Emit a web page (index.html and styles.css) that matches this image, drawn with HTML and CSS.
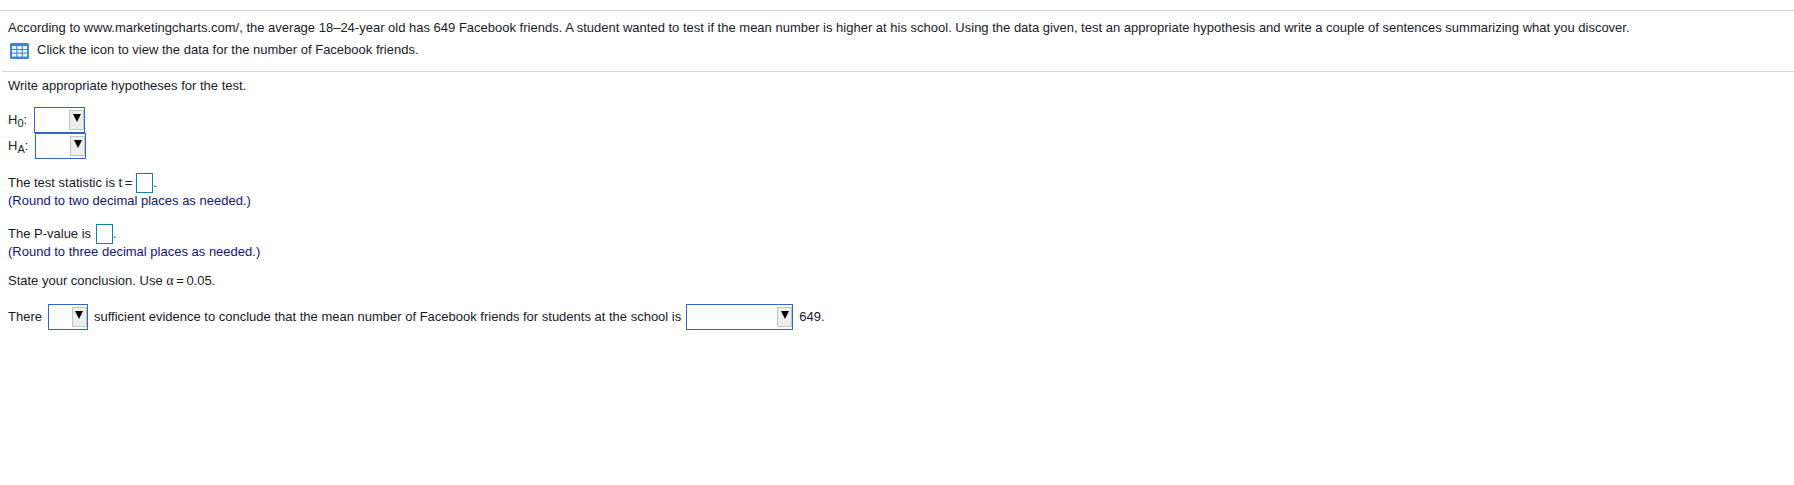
FILE: index.html
```html
<!DOCTYPE html>
<html lang="en">
<head>
<meta charset="utf-8">
<title>Hypothesis test</title>
<link rel="stylesheet" href="styles.css">
</head>
<body>
<section class="question">
  <p class="statement">According to www.marketingcharts.com/, the average 18&ndash;24-year old has 649 Facebook friends. A student wanted to test if the mean number is higher at his school. Using the data given, test an appropriate hypothesis and write a couple of sentences summarizing what you discover.</p>
  <div class="data-link">
    <svg class="grid-icon" width="19" height="16" viewBox="0 0 19 16" aria-hidden="true">
      <rect x="0" y="0" width="19" height="16" rx="1.5" fill="#3a84e0"/>
      <g fill="#eef5fd">
        <rect x="2" y="3" width="4.3" height="3"/><rect x="7.4" y="3" width="4.3" height="3"/><rect x="12.8" y="3" width="4.3" height="3"/>
        <rect x="2" y="7" width="4.3" height="2.6"/><rect x="7.4" y="7" width="4.3" height="2.6"/><rect x="12.8" y="7" width="4.3" height="2.6"/>
        <rect x="2" y="10.6" width="4.3" height="3"/><rect x="7.4" y="10.6" width="4.3" height="3"/><rect x="12.8" y="10.6" width="4.3" height="3"/>
      </g>
    </svg>
    <span>Click the icon to view the data for the number of Facebook friends.</span>
  </div>
</section>
<section class="answer">
  <p class="first">Write appropriate hypotheses for the test.</p>
  <div class="hypotheses">
    <div class="hyp"><span class="hyp-label">H<sub>0</sub>:</span><span class="select s-hyp"><span class="arrow"></span></span></div>
    <div class="hyp hyp-alt"><span class="hyp-label">H<sub>A</sub>:</span><span class="select s-hyp"><span class="arrow"></span></span></div>
  </div>
  <div class="stat"><span class="before-t">The test statistic is t&#8201;=</span><span class="box"></span><span>.</span></div>
  <p class="hint">(Round to two decimal places as needed.)</p>
  <div class="pval"><span class="before-p">The P-value is</span><span class="box"></span><span>.</span></div>
  <p class="hint">(Round to three decimal places as needed.)</p>
  <p class="state">State your conclusion. Use <span class="alpha">&alpha;</span>&#8201;=&#8201;0.05.</p>
  <div class="concl">
    <span>There</span><span class="select s-small"><span class="arrow"></span></span>
    <span>sufficient evidence to conclude that the mean number of Facebook friends for students at the school is</span><span class="select s-big"><span class="arrow"></span></span>
    <span>649.</span>
  </div>
</section>
</body>
</html>
```
FILE: styles.css
```css
* { box-sizing: border-box; }
html, body { margin: 0; padding: 0; background: #fff; }
body {
  font-family: "Liberation Sans", Arial, sans-serif;
  font-size: 13px;
  line-height: 16px;
  color: #1a1a2a;
  height: 485px;
  overflow: hidden;
  padding-top: 10px;
}
p { margin: 0; }
.question {
  border-top: 1px solid #d0d3e2;
  padding: 9px 0 0 8px;
}
.statement { white-space: nowrap; }
.data-link {
  display: flex;
  align-items: center;
  gap: 8px;
  margin: 5px 0 0 2px;
  height: 18px;
}
.grid-icon { display: block; flex: none; margin-top: 2px; }
.answer {
  margin: 12px 0 0 2px;
  border-top: 1px solid #d0d3e2;
  padding: 6px 0 0 6px;
}
.hypotheses { margin-top: 13px; }
.hyp { display: flex; align-items: center; height: 26px; }
.hyp-label { width: 26px; }
.hyp-alt .hyp-label { width: 27px; }
sub { font-size: 11px; line-height: 0; vertical-align: -3px; }
.select {
  display: flex;
  justify-content: flex-end;
  align-items: center;
  height: 26px;
  border: 1px solid #2f66cc;
  padding: 0;
  background: #fff;
  flex: none;
}
.s-hyp { width: 51px; }
.s-small { width: 40px; margin: 0 6px; }
.s-big { width: 107px; margin: 0 6px 0 5px; }
.arrow {
  width: 15px;
  height: 20px;
  background: #eeeeee;
  border: 1px solid #c4c4c4;
  position: relative;
}
.arrow::after {
  content: "";
  position: absolute;
  left: 2.5px;
  top: 3px;
  border-style: solid;
  border-width: 8px 4px 0;
  border-color: #000 transparent transparent;
}
.stat, .pval, .concl { display: flex; align-items: center; }
.stat { margin-top: 14px; height: 20px; }
.before-t { margin-right: 4px; }
.before-p { margin-right: 5px; }
.box {
  width: 17px;
  height: 20px;
  border: 1px solid #13829b;
  flex: none;
}
.hint { color: #14147c; }
.pval { margin-top: 15px; height: 20px; }
.state { margin-top: 13px; }
.alpha { font-family: "Liberation Serif", serif; font-size: 14px; line-height: 0; }
.concl { margin-top: 15px; height: 26px; }
```
